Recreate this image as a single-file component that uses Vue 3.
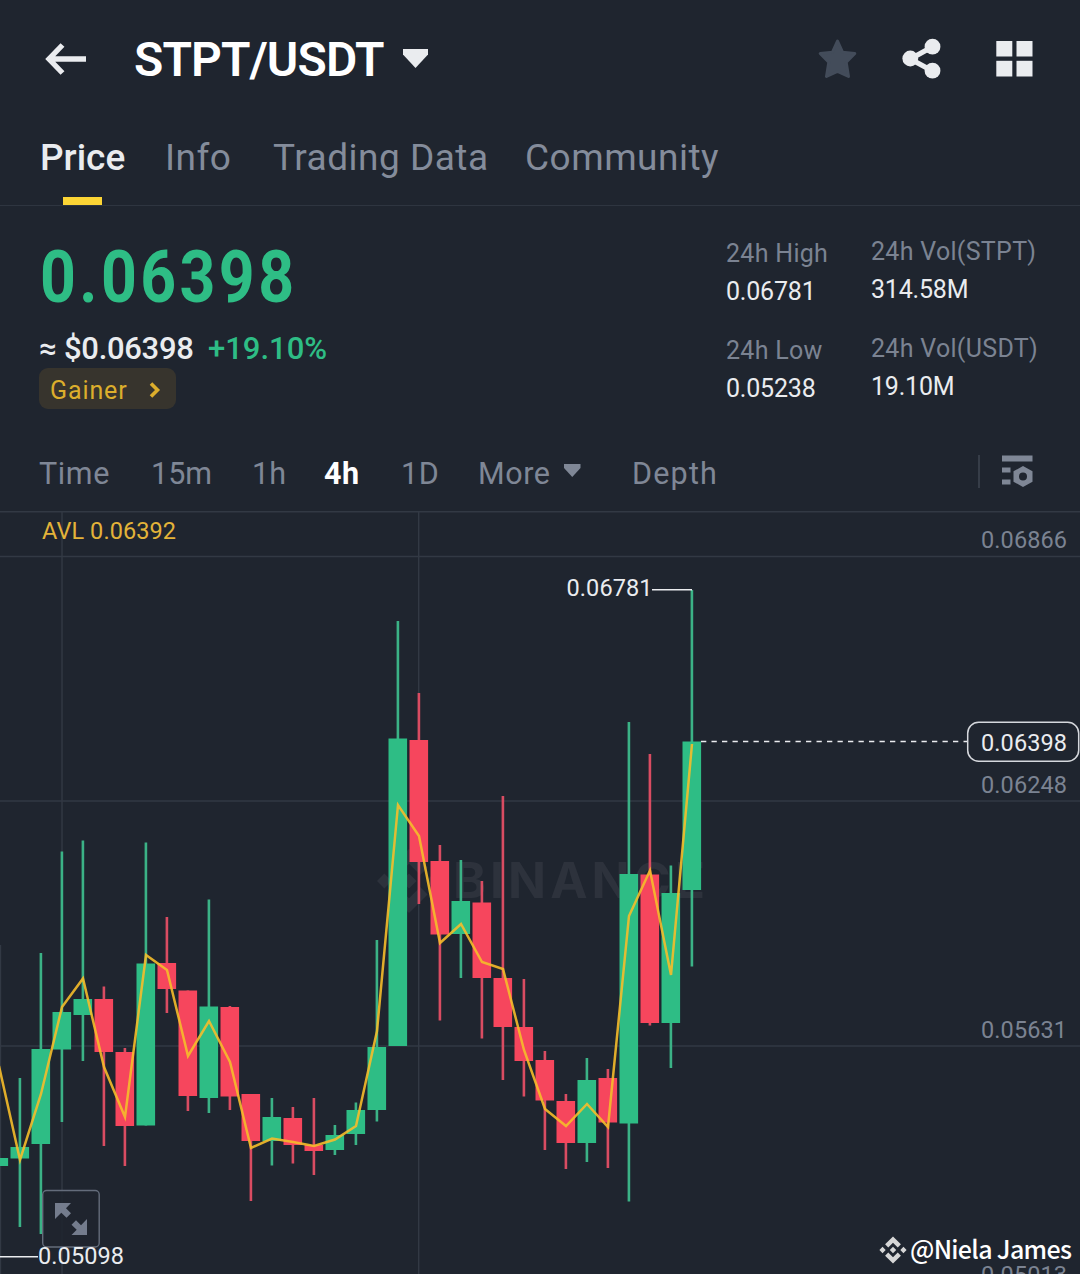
<script setup>
import { ref, computed } from "vue";

const CANDLE_WIDTH = 18.6;
const activeTab = ref("Price");
const activeInterval = ref("4h");

const tabs = ["Price", "Info", "Trading Data", "Community"];
const intervals = ["Time", "15m", "1h", "4h", "1D", "More", "Depth"];

const stats = [
  [
    { label: "24h High", value: "0.06781" },
    { label: "24h Low", value: "0.05238" }
  ],
  [
    { label: "24h Vol(STPT)", value: "314.58M" },
    { label: "24h Vol(USDT)", value: "19.10M" }
  ]
];

// x, high, top, bottom, low, up
const candles = [
  [-1, 1158, 1158, 1166, 1166, 1],
  [20, 1078, 1147, 1158.5, 1227, 1],
  [41, 953, 1049, 1144, 1234, 1],
  [62, 851.5, 1012, 1049.5, 1122, 1],
  [83, 840.5, 999, 1015, 1061, 1],
  [104, 986.5, 999, 1052, 1146, 0],
  [125, 1048, 1052, 1126, 1166, 0],
  [146, 842.5, 963.5, 1125.5, 1125.5, 1],
  [167, 917, 963, 989, 1013, 0],
  [188, 990.5, 990.5, 1096, 1111, 0],
  [209, 899.5, 1006.5, 1098, 1113, 1],
  [230, 1006, 1007, 1096.5, 1110, 0],
  [251, 1094, 1094, 1141, 1201, 0],
  [272, 1098, 1117, 1141, 1165.5, 1],
  [293, 1107, 1118, 1145, 1163.5, 0],
  [314, 1098, 1145, 1151, 1175, 0],
  [335, 1125, 1135, 1150, 1155, 1],
  [356, 1102.5, 1110, 1134, 1145, 1],
  [377, 940, 1047, 1110, 1121.5, 1],
  [398, 621, 738.5, 1046, 1046, 1],
  [419, 693, 740, 862, 904, 0],
  [440, 845, 861, 934.5, 1020.5, 0],
  [461, 860, 901, 934, 978, 1],
  [482, 881, 902.5, 978, 1038.5, 0],
  [503, 796, 978, 1027, 1080, 0],
  [524, 979, 1027, 1061, 1096.5, 0],
  [545, 1051, 1060, 1100.5, 1150, 0],
  [566, 1094, 1101, 1143, 1169, 0],
  [587, 1058, 1080, 1143, 1162, 1],
  [608, 1069, 1078, 1122.5, 1168, 0],
  [629, 722, 874, 1123.5, 1201.5, 1],
  [650, 754, 874.5, 1023, 1025.5, 0],
  [671, 865.5, 893, 1023, 1068, 1],
  [692, 590, 741.5, 890, 966.5, 1]
];

const avl = [
  1066, 1160, 1094, 1007, 978.5, 1067, 1117, 955, 970, 1056, 1021, 1062, 1148,
  1138.5, 1142, 1146, 1139.5, 1126, 1031, 805, 836, 943, 924, 962, 969, 1050,
  1109, 1126, 1104, 1127, 916, 870.5, 975, 744
];

const avlPoints = computed(() =>
  candles.map((c, i) => `${c[0]},${avl[i]}`).join(" ")
);

const axisLabels = [
  { text: "0.06866", y: 548 },
  { text: "0.06248", y: 793 },
  { text: "0.05631", y: 1038 },
  { text: "0.05013", y: 1283 }
];
</script>

<template>
  <div class="screen">
    <header class="header">
      <svg class="back" width="42" height="34" viewBox="0 0 42 34">
        <path d="M17.500 3 4 17l13.500 14M4 17h37" />
      </svg>
      <h1>STPT/USDT</h1>
      <svg class="caret" width="25" height="20" viewBox="0 0 25 20">
        <path d="M0 0h25v5.500L12.500 19 0 5.500z" />
      </svg>
      <div class="actions">
        <svg width="40" height="42" viewBox="0 0 40 42">
          <path
            class="star"
            d="M20.500 3 25.500 14.200 37.800 15.500 29.200 24.300 31.500 38.500 20.500 33.500 9.500 38.500 11.800 24.300 3.200 15.500 15.500 14.200z"
          />
        </svg>
        <svg class="light" width="40" height="42" viewBox="0 0 40 42">
          <path d="M30.500 8.700 8.300 21l22.200 12" fill="none" stroke="#eaecef" stroke-width="5.200" />
          <circle cx="30.500" cy="8.700" r="7.900" />
          <circle cx="8.300" cy="20.500" r="7.900" />
          <circle cx="30.500" cy="32.700" r="7.900" />
        </svg>
        <svg class="light" width="37" height="36" viewBox="0 0 37 36">
          <rect x="0.300" y="0" width="16" height="15.500" />
          <rect x="20.500" y="0" width="16" height="15.500" />
          <rect x="0.300" y="19.800" width="16" height="15.700" />
          <rect x="20.500" y="19.800" width="16" height="15.700" />
        </svg>
      </div>
    </header>

    <nav class="tabs">
      <a
        v-for="tab in tabs"
        :key="tab"
        :class="{ active: tab === activeTab }"
        @click="activeTab = tab"
      >
        <span>{{ tab }}</span>
      </a>
    </nav>

    <section class="ticker">
      <div class="quote">
        <div class="price">0.06398</div>
        <div class="sub">
          <span class="approx">≈</span>
          <span class="usd">$0.06398</span>
          <span class="change">+19.10%</span>
        </div>
        <div class="badge">
          <span>Gainer</span>
          <svg width="12" height="16" viewBox="0 0 12 16">
            <path d="M2 1.500 8.500 8 2 14.500" />
          </svg>
        </div>
      </div>
      <div class="stats" v-for="(column, index) in stats" :key="index">
        <div class="stat" v-for="item in column" :key="item.label">
          <div class="label">{{ item.label }}</div>
          <div class="value">{{ item.value }}</div>
        </div>
      </div>
    </section>

    <nav class="intervals">
      <a
        v-for="item in intervals"
        :key="item"
        :class="{ active: item === activeInterval }"
        @click="activeInterval = item"
      >
        <span>{{ item }}</span>
        <svg v-if="item === 'More'" width="17" height="13" viewBox="0 0 17 13">
          <path d="M0 0h16.500v4L8.250 13 0 4z" />
        </svg>
      </a>
      <div class="settings">
        <svg width="31" height="33" viewBox="0 0 31 33">
          <path
            fill-rule="evenodd"
            d="M0 0.500h30.500v6H0zM0 12.500h8.500v5H0zM0 24.500h8.500v5H0zM21 11l9.500 5.300v10.400L21 32l-9.500-5.300V16.300zM21 17.500a4 4 0 1 0 0 8 4 4 0 0 0 0-8z"
          />
        </svg>
      </div>
    </nav>

    <svg class="chart" width="1080" height="763" viewBox="0 511 1080 763">
      <g class="grid">
        <path d="M0 556.500H1080M0 801H1080M0 1046H1080M62 512V1274M418.700 512V1274M0.500 945V1274" />
        <path d="M0 511.700H1080" />
      </g>

      <!-- watermark -->
      <g class="watermark">
        <g transform="translate(409 881) scale(2)">
          <path d="M0-16 9.300-6.700 5.600-3 0-8.600-5.600-3-9.300-6.700z" />
          <path d="M0 16 9.300 6.700 5.600 3 0 8.600-5.600 3-9.300 6.700z" />
          <path d="M0-3.800 3.800 0 0 3.800-3.800 0zM-12.300-3.700-8.600 0-12.300 3.700-16 0zM12.300-3.700 16 0 12.300 3.700 8.600 0z" />
        </g>
        <text x="453" y="898" textLength="252">BINANCE</text>
      </g>

      <g
        v-for="c in candles"
        :key="c[0]"
        :class="c[5] ? 'up' : 'down'"
      >
        <rect class="wick" :x="c[0] - 1.4" :y="c[1]" width="2.6" :height="c[4] - c[1]" />
        <rect :x="c[0] - 9.5" :y="c[2]" :width="CANDLE_WIDTH" :height="c[3] - c[2]" />
      </g>
      <polyline class="avl-line" :points="avlPoints" />

      <text class="avl" x="42" y="539" textLength="134">AVL 0.06392</text>
      <text
        v-for="label in axisLabels"
        :key="label.text"
        class="axis"
        x="981"
        :y="label.y"
        textLength="86"
      >{{ label.text }}</text>

      <!-- high and low markers -->
      <path class="marker" d="M652 589.700H692M0 1256.700H38" />
      <text class="mark" x="566.500" y="596" textLength="86">0.06781</text>

      <!-- last price -->
      <path class="last" d="M701 741.500H967" />
      <rect class="last-box" x="967.700" y="722.200" width="111" height="39" rx="11" />
      <text class="mark" x="981" y="751" textLength="86">0.06398</text>

      <!-- fullscreen button -->
      <rect class="expand" x="42.700" y="1190.500" width="56.500" height="56.500" rx="4" />
      <path
        class="expand-icon"
        d="M55 1203h16l-5 5.200 5 5-4.500 4.500-5.200-5-6.300 6.300zM87 1235H71.500l5.200-5.200-5.200-5 4.500-4.500 5 5 6-6.300z"
      />
      <text class="mark" x="38" y="1263.700" textLength="86">0.05098</text>

      <g class="author">
        <g transform="translate(893 1250) scale(0.85)">
          <path d="M0-16 9.300-6.700 5.600-3 0-8.600-5.600-3-9.300-6.700z" />
          <path d="M0 16 9.300 6.700 5.600 3 0 8.600-5.600 3-9.300 6.700z" />
          <path d="M0-3.800 3.800 0 0 3.800-3.800 0zM-12.300-3.700-8.600 0-12.300 3.700-16 0zM12.300-3.700 16 0 12.300 3.700 8.600 0z" />
        </g>
        <text x="910" y="1259" textLength="162">@Niela James</text>
      </g>
    </svg>
  </div>
</template>

<style>
body {
  margin: 0;
  background: #1f252f;
}
</style>

<style scoped>
.screen {
  width: 1080px;
  height: 1274px;
  overflow: hidden;
  background: #1f252f;
  color: #eaecef;
  font-family: Roboto, "Liberation Sans", sans-serif;
}

svg {
  display: block;
  flex: none;
}

.header {
  display: flex;
  align-items: center;
  height: 118px;
  padding: 0 47px 0 45px;
  box-sizing: border-box;
}

.back path {
  fill: none;
  stroke: #eaecef;
  stroke-width: 5.4;
}

h1 {
  margin: 2px 0 0 47px;
  width: 250px;
  font-size: 48px;
  font-weight: 600;
  line-height: 60px;
  letter-spacing: -0.9px;
  color: #fff;
  white-space: nowrap;
}

.caret {
  margin-left: 19px;
  fill: #eaecef;
}

.actions {
  display: flex;
  align-items: center;
  margin-left: auto;
}

.actions svg:nth-child(2) {
  margin-left: 45px;
  margin-right: 54px;
}

.star {
  fill: #434c5a;
  stroke: #434c5a;
  stroke-width: 3;
  stroke-linejoin: round;
}

.light {
  fill: #eaecef;
}

.tabs {
  display: grid;
  grid-template-columns: 125px 108px 252px auto;
  height: 87px;
  padding-left: 40px;
  border-bottom: 1px solid #2e3540;
  color: #848c9b;
  font-size: 37px;
  font-weight: 450;
  line-height: 80px;
  letter-spacing: 0.5px;
}

.tabs a {
  justify-self: start;
  position: relative;
  white-space: nowrap;
}

.tabs .active {
  color: #eaecef;
  font-weight: 500;
  letter-spacing: 0;
}

.tabs .active::after {
  content: "";
  position: absolute;
  left: calc(50% - 20px);
  top: 79px;
  width: 39px;
  height: 8px;
  background: #fcd535;
}

.ticker {
  display: flex;
  height: 230px;
  padding-left: 39px;
}

.quote {
  width: 687px;
  padding-top: 29px;
}

.price {
  width: 300px;
  margin-left: 1px;
  font-size: 73px;
  font-weight: 700;
  line-height: 84px;
  letter-spacing: 4px;
  color: #2ebd85;
  transform: scaleX(0.857);
  transform-origin: left;
}

.sub {
  display: flex;
  margin-top: 9px;
  height: 40px;
  font-size: 31px;
  font-weight: 500;
  line-height: 41px;
  white-space: nowrap;
}

.approx {
  width: 25px;
}

.usd {
  width: 144px;
  letter-spacing: -0.3px;
}

.change {
  color: #2ebd85;
}

.badge {
  display: flex;
  align-items: center;
  justify-content: space-between;
  width: 137px;
  height: 41px;
  padding: 3px 15px 0 11px;
  box-sizing: border-box;
  border-radius: 9px;
  background: #37342d;
  color: #dcae2c;
  font-size: 25px;
  letter-spacing: 0.9px;
}

.badge path {
  fill: none;
  stroke: #dcae2c;
  stroke-width: 3.6;
}

.stats {
  width: 145px;
  padding-top: 29px;
  font-size: 25px;
  line-height: 38px;
  white-space: nowrap;
}

.stats:last-child {
  padding-top: 27px;
}

.stat {
  margin-bottom: 21px;
}

.label {
  color: #7b8392;
  letter-spacing: 0.3px;
}

.value {
  letter-spacing: -0.2px;
}

.intervals {
  display: grid;
  grid-template-columns: 112px 101px 72px 77px 77px 154px auto auto;
  align-items: center;
  height: 75px;
  padding: 0 47px 0 39px;
  color: #7f8796;
  font-size: 30.5px;
  letter-spacing: 0.6px;
  white-space: nowrap;
}

.intervals a {
  display: flex;
}

.intervals a:nth-child(2),
.intervals a:nth-child(3) {
  letter-spacing: 0;
}

.intervals a:nth-child(7) {
  letter-spacing: 1.2px;
}

.intervals a svg {
  margin: 8px 0 0 13px;
  fill: #7f8796;
}

.intervals .active {
  color: #fff;
  font-weight: 700;
}

.settings {
  justify-self: end;
  display: flex;
  align-items: center;
  height: 33px;
  margin-bottom: 5px;
  padding-left: 22px;
  border-left: 2px solid #363d48;
  fill: #7f8796;
}

.grid path {
  fill: none;
  stroke: #323944;
  stroke-width: 1.4;
}

.watermark {
  fill: #2d323c;
}

.watermark text {
  font: 700 50px Inter, sans-serif;
}

.up {
  fill: #2ebd85;
}

.down {
  fill: #f6465d;
}

.up .wick {
  fill: #3bb286;
}

.down .wick {
  fill: #d94c62;
}

.avl-line {
  fill: none;
  stroke: #f5bd2a;
  stroke-width: 2.5;
  opacity: 0.9;
}

.chart text {
  font-size: 23.5px;
}

.chart .watermark text {
  font-size: 50px;
}

.avl {
  fill: #e3b339;
}

.axis {
  fill: #7b8392;
}

.mark {
  fill: #eaecef;
}

.marker {
  stroke: #eaecef;
  stroke-width: 1.5;
}

.last {
  stroke: #eaecef;
  stroke-width: 1.4;
  stroke-dasharray: 5.3 5.2;
}

.last-box {
  fill: #1f252f;
  stroke: #d5d8dd;
  stroke-width: 1.5;
}

.expand {
  fill: #1f252f;
  fill-opacity: 0.9;
  stroke: #646c7b;
  stroke-width: 1.4;
}

.expand-icon {
  fill: #747c8d;
}

.author {
  fill: #d6d6d6;
}

.chart .author text {
  fill: #fff;
  font-family: "Noto Sans CJK SC", sans-serif;
  font-size: 25px;
  font-weight: 500;
}
</style>
